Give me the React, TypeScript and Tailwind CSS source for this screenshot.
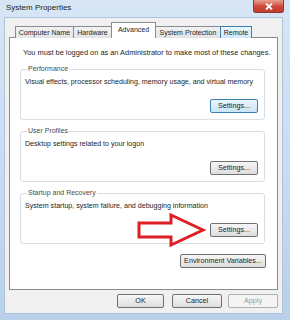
import type { ReactNode } from "react";

const FONT = { fontFamily: '"Liberation Sans", Arial, sans-serif' };

function WinButton({
  children,
  className = "",
  focused = false,
  disabled = false,
}: {
  children: ReactNode;
  className?: string;
  focused?: boolean;
  disabled?: boolean;
}) {
  return (
    <button
      type="button"
      className={`h-[14px] whitespace-nowrap rounded-[2px] border text-[7.2px] leading-none ${
        focused
          ? "border-[#3c7fb1] bg-gradient-to-b from-[#eaf6fd] to-[#c9e5f7] text-[#1e1e1e]"
          : disabled
            ? "border-[#adb2b5] bg-[#f4f4f4] text-[#9c9c9c]"
            : "border-[#707070] bg-gradient-to-b from-[#f6f6f6] to-[#dedede] text-[#1e1e1e]"
      } ${className}`}
    >
      {children}
    </button>
  );
}

function Group({ title, text }: { title: string; text: string }) {
  return (
    <fieldset className="rounded-[3px] border border-[#d5dfe5] pl-[4px] pr-[6px] pb-[6px]">
      <legend className="ml-[2px] px-[1px] text-[7px] leading-[10px] text-[#4b4b4b]">
        {title}
      </legend>
      <p className="mt-[3px] whitespace-nowrap text-[7.1px] leading-[10px] text-[#1e1e1e]">{text}</p>
      <div className="mt-[12px] flex justify-end">
        <WinButton className="w-[48px]" focused={title === "Performance"}>
          Settings...
        </WinButton>
      </div>
    </fieldset>
  );
}

const tabs = ["Computer Name", "Hardware", "Advanced", "System Protection", "Remote"];
const tabWidths: Record<string, string> = {
  "Computer Name": "w-[59px]",
  Hardware: "w-[39px]",
  Advanced: "w-[45px]",
  "System Protection": "w-[66px]",
  Remote: "w-[32px]",
};

export default function App() {
  return (
    <div
      className="relative flex h-[320px] w-[290px] flex-col overflow-hidden bg-gradient-to-b from-[#d7e6f5] via-[#cadcf0] to-[#b9d0ea]"
      style={FONT}
    >
      {/* Title bar */}
      <div className="flex h-[17px] items-start justify-between">
        <span className="ml-[6px] mt-[3px] text-[8px] leading-[10px] text-[#1b1b1b]">
          System Properties
        </span>
        <div className="mr-[6px] flex h-[13px] w-[31px] items-center justify-center rounded-b-[3px] border border-t-0 border-[#8a3a32] bg-gradient-to-b from-[#e6a193] via-[#cf4b3c] to-[#c23b2c]">
          <svg width="8" height="7" viewBox="0 0 8 7">
            <path d="M1 0.5 L7 6.5 M7 0.5 L1 6.5" stroke="white" strokeWidth="1.8" />
          </svg>
        </div>
      </div>

      {/* Client area */}
      <div className="mb-[6px] ml-[4px] mr-[7px] flex flex-1 flex-col border border-[#aec4dc] bg-[#f0f0f0] px-[4px]">
        {/* Tabs */}
        <div className="relative z-10 ml-[7px] mt-[4px] flex items-end">
          {tabs.map((t) => {
            const selected = t === "Advanced";
            const hover = t === "Remote";
            return (
              <div
                key={t}
                className={`-ml-px flex items-center justify-center whitespace-nowrap border border-b-0 text-[7px] leading-none text-[#1e1e1e] ${tabWidths[t]} ${
                  selected
                    ? "h-[16px] border-[#898c95] bg-white pb-[3px]"
                    : hover
                      ? "h-[12px] border-[#3c7fb1] bg-gradient-to-b from-[#eaf6fd] to-[#cde9fb]"
                      : "h-[12px] border-[#898c95] bg-gradient-to-b from-[#f2f2f2] to-[#e3e3e3]"
                }`}
              >
                {t}
              </div>
            );
          })}
        </div>

        {/* Tab panel */}
        <div className="-mt-px flex h-[253px] flex-col border border-[#898c95] bg-white pl-[10px] pr-[12px]">
          <p className="ml-[3px] mt-[10px] whitespace-nowrap text-[7.4px] leading-[10px] text-[#1e1e1e]">
            You must be logged on as an Administrator to make most of these changes.
          </p>
          <div className="mt-[6px] flex flex-col gap-[6px]">
            <Group
              title="Performance"
              text="Visual effects, processor scheduling, memory usage, and virtual memory"
            />
            <Group title="User Profiles" text="Desktop settings related to your logon" />
            <Group
              title="Startup and Recovery"
              text="System startup, system failure, and debugging information"
            />
          </div>
          <div className="-mr-[1px] mt-[10px] flex justify-end">
            <WinButton className="w-[86px]">Environment Variables...</WinButton>
          </div>
        </div>

        {/* Dialog buttons */}
        <div className="mt-[4px] flex justify-end">
          <WinButton className="w-[47px]">OK</WinButton>
          <WinButton className="ml-[8px] w-[50px]">Cancel</WinButton>
          <WinButton className="ml-[6px] w-[50px]" disabled>
            Apply
          </WinButton>
        </div>
      </div>

      {/* Red annotation arrow */}
      <svg
        className="pointer-events-none absolute left-0 top-0"
        width="290"
        height="320"
        viewBox="0 0 290 320"
      >
        <polygon
          points="139,223 171,223 171,215 203,230 171,245 171,237 139,237"
          fill="none"
          stroke="#df1f26"
          strokeWidth="3"
          strokeLinejoin="miter"
        />
      </svg>
    </div>
  );
}
